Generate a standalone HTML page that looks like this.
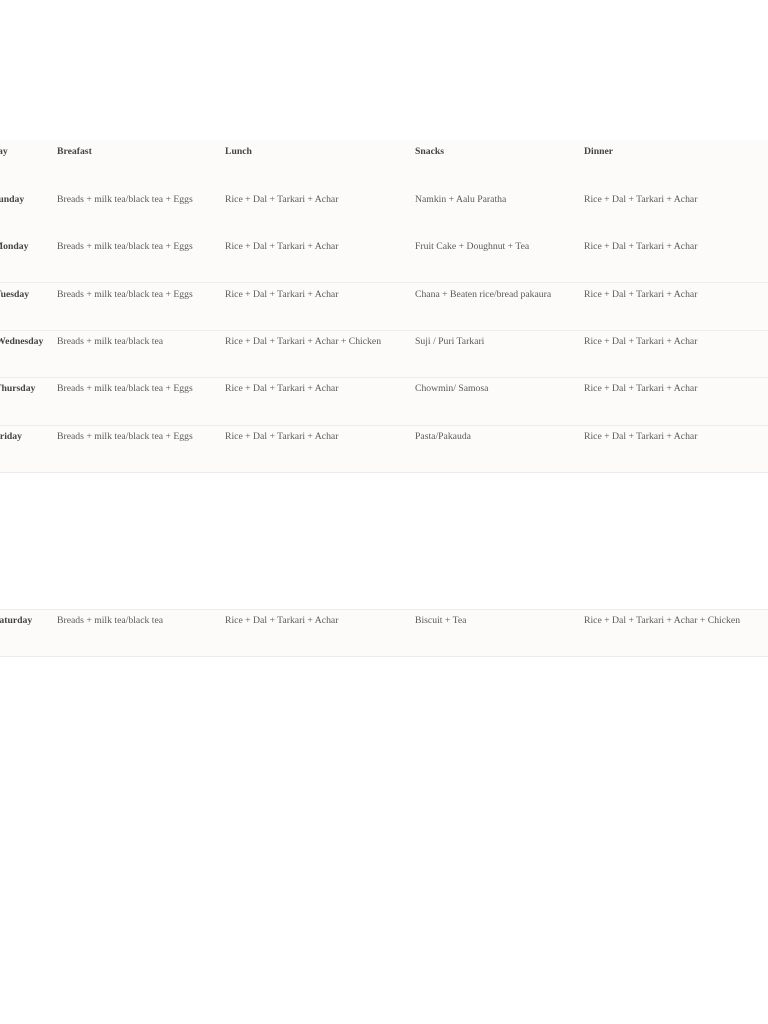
<!DOCTYPE html>
<html><head><meta charset="utf-8"><style>
html,body{margin:0;padding:0;background:#fff;width:768px;height:1024px;overflow:hidden;position:relative;font-family:"Liberation Serif",serif;font-size:9.7px;color:#5a5a5a}
.bg{position:absolute;left:0;width:768px;background:#fcfbfa}
.ln{position:absolute;left:0;width:768px;height:1px;background:#ececea}
.t{position:absolute;white-space:nowrap;line-height:12px}
.b{font-weight:bold;color:#444}
</style></head><body>
<div class="bg" style="top:140px;height:332px"></div>
<div class="bg" style="top:609px;height:47px"></div>
<div class="ln" style="top:282px"></div>
<div class="ln" style="top:330px"></div>
<div class="ln" style="top:377px"></div>
<div class="ln" style="top:425px"></div>
<div class="ln" style="top:472px"></div>
<div class="ln" style="top:609px"></div>
<div class="ln" style="top:656px"></div>

<div class="t b" style="top:146px;left:-9px">Day</div>
<div class="t b" style="top:146px;left:57px">Breafast</div>
<div class="t b" style="top:146px;left:225px">Lunch</div>
<div class="t b" style="top:146px;left:415px">Snacks</div>
<div class="t b" style="top:146px;left:584px">Dinner</div>

<div class="t b" style="top:194px;left:-7px">Sunday</div>
<div class="t" style="top:194px;left:57px">Breads + milk tea/black tea + Eggs</div>
<div class="t" style="top:194px;left:225px">Rice + Dal + Tarkari + Achar</div>
<div class="t" style="top:194px;left:415px">Namkin + Aalu Paratha</div>
<div class="t" style="top:194px;left:584px">Rice + Dal + Tarkari + Achar</div>

<div class="t b" style="top:241px;left:-6px">Monday</div>
<div class="t" style="top:241px;left:57px">Breads + milk tea/black tea + Eggs</div>
<div class="t" style="top:241px;left:225px">Rice + Dal + Tarkari + Achar</div>
<div class="t" style="top:241px;left:415px">Fruit Cake + Doughnut + Tea</div>
<div class="t" style="top:241px;left:584px">Rice + Dal + Tarkari + Achar</div>

<div class="t b" style="top:289px;left:-5px">Tuesday</div>
<div class="t" style="top:289px;left:57px">Breads + milk tea/black tea + Eggs</div>
<div class="t" style="top:289px;left:225px">Rice + Dal + Tarkari + Achar</div>
<div class="t" style="top:289px;left:415px">Chana + Beaten rice/bread pakaura</div>
<div class="t" style="top:289px;left:584px">Rice + Dal + Tarkari + Achar</div>

<div class="t b" style="top:336px;left:-4px">Wednesday</div>
<div class="t" style="top:336px;left:57px">Breads + milk tea/black tea</div>
<div class="t" style="top:336px;left:225px">Rice + Dal + Tarkari + Achar + Chicken</div>
<div class="t" style="top:336px;left:415px">Suji / Puri Tarkari</div>
<div class="t" style="top:336px;left:584px">Rice + Dal + Tarkari + Achar</div>

<div class="t b" style="top:383px;left:-5px">Thursday</div>
<div class="t" style="top:383px;left:57px">Breads + milk tea/black tea + Eggs</div>
<div class="t" style="top:383px;left:225px">Rice + Dal + Tarkari + Achar</div>
<div class="t" style="top:383px;left:415px">Chowmin/ Samosa</div>
<div class="t" style="top:383px;left:584px">Rice + Dal + Tarkari + Achar</div>

<div class="t b" style="top:431px;left:-6px">Friday</div>
<div class="t" style="top:431px;left:57px">Breads + milk tea/black tea + Eggs</div>
<div class="t" style="top:431px;left:225px">Rice + Dal + Tarkari + Achar</div>
<div class="t" style="top:431px;left:415px">Pasta/Pakauda</div>
<div class="t" style="top:431px;left:584px">Rice + Dal + Tarkari + Achar</div>

<div class="t b" style="top:615px;left:-6px">Saturday</div>
<div class="t" style="top:615px;left:57px">Breads + milk tea/black tea</div>
<div class="t" style="top:615px;left:225px">Rice + Dal + Tarkari + Achar</div>
<div class="t" style="top:615px;left:415px">Biscuit + Tea</div>
<div class="t" style="top:615px;left:584px">Rice + Dal + Tarkari + Achar + Chicken</div>
</body></html>
